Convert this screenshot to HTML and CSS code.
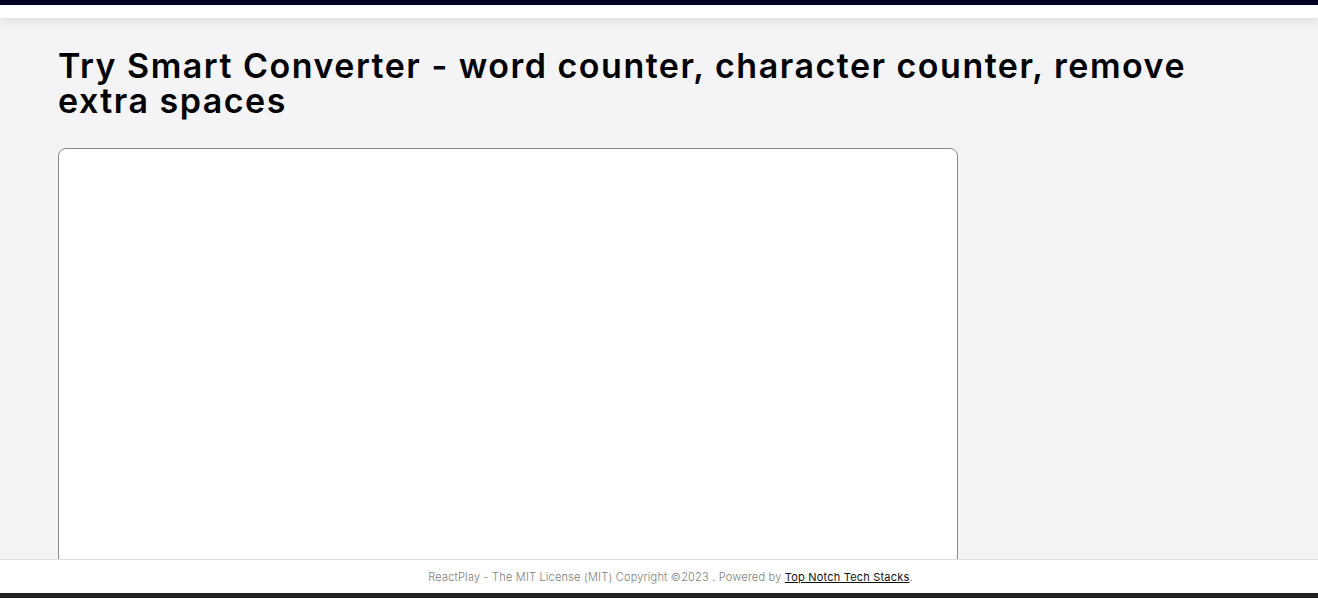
FILE: index.html
```html
<!DOCTYPE html>
<html lang="en">
<head>
<meta charset="utf-8">
<title>Smart Converter</title>
<link rel="stylesheet" href="styles.css">
</head>
<body>
<header class="app-header"></header>
<main class="play-main">
  <h1 class="play-title">Try Smart Converter - word counter, character counter, remove extra spaces</h1>
  <textarea class="play-input" aria-label="Text input"></textarea>
</main>
<footer class="app-footer">
  <p class="footer-text">ReactPlay - The MIT License (MIT) Copyright ©2023 . Powered by <a class="footer-link" href="#">Top Notch Tech Stacks</a>.</p>
</footer>
</body>
</html>
```
FILE: styles.css
```css
html, body {
  margin: 0;
  padding: 0;
  height: 100%;
}
body {
  background: #f4f4f6;
  font-family: Inter, "Open Sans", sans-serif;
  overflow: hidden;
}
.app-header {
  height: 13px;
  background: #ffffff;
  border-top: 5px solid #010122;
  box-shadow: 0 2px 12px rgba(0, 0, 0, 0.12);
  position: relative;
  z-index: 2;
}
.play-main {
  padding: 30px 58px 0;
}
.play-title {
  margin: 0 0 30px;
  font-size: 34px;
  line-height: 35px;
  font-weight: 600;
  letter-spacing: 1.5px;
  color: #000;
  max-width: 1170px;
}
.play-input {
  display: block;
  box-sizing: border-box;
  width: 900px;
  height: 450px;
  margin: 0;
  border: 1px solid #8a8a8a;
  border-radius: 8px;
  background: #fff;
  resize: none;
}
.app-footer {
  position: fixed;
  left: 0;
  right: 0;
  bottom: 0;
  height: 33px;
  background: #fff;
  border-top: 1px solid #dedede;
  border-bottom: 5px solid #222;
  display: flex;
  align-items: center;
  justify-content: center;
  padding-left: 23px;
}
.footer-text {
  margin: 0;
  font-size: 11px;
  font-weight: 300;
  letter-spacing: 0.2px;
  color: #7d7d7d;
}
.footer-link {
  color: #111;
  font-weight: 400;
}
```
